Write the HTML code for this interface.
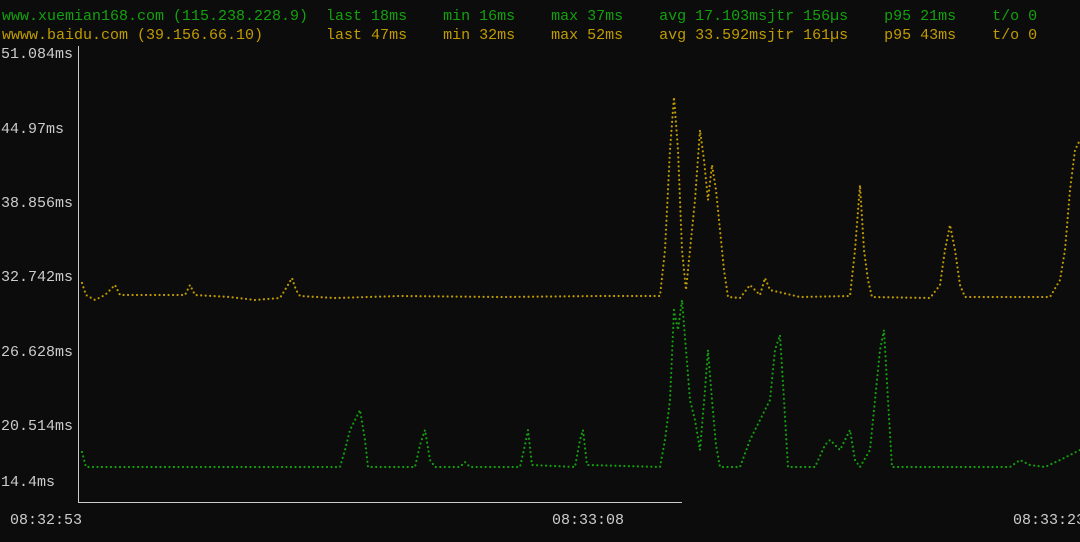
<!DOCTYPE html>
<html><head><meta charset="utf-8"><style>
html,body{margin:0;padding:0;background:#0c0c0c;width:1080px;height:542px;overflow:hidden}
.t{position:absolute;font-family:"Liberation Mono","DejaVu Sans Mono",monospace;font-size:15px;line-height:18px;white-space:pre}
.g{color:#13a10e}.y{color:#c19c00}.w{color:#cccccc}
</style></head><body>
<div class="t g" style="left:2px;top:8px">www.xuemian168.com (115.238.228.9)  last 18ms    min 16ms    max 37ms    avg 17.103msjtr 156µs    p95 21ms    t/o 0</div>
<div class="t y" style="left:2px;top:27px">wwww.baidu.com (39.156.66.10)       last 47ms    min 32ms    max 52ms    avg 33.592msjtr 161µs    p95 43ms    t/o 0</div>
<div class="t w" style="left:1px;top:46px">51.084ms</div>
<div class="t w" style="left:1px;top:121px">44.97ms</div>
<div class="t w" style="left:1px;top:195px">38.856ms</div>
<div class="t w" style="left:1px;top:269px">32.742ms</div>
<div class="t w" style="left:1px;top:344px">26.628ms</div>
<div class="t w" style="left:1px;top:418px">20.514ms</div>
<div class="t w" style="left:1px;top:474px">14.4ms</div>
<div class="t w" style="left:10px;top:512px">08:32:53</div>
<div class="t w" style="left:552px;top:512px">08:33:08</div>
<div class="t w" style="left:1013px;top:512px">08:33:23</div>
<svg width="1080" height="542" style="position:absolute;left:0;top:0">
<line x1="78.5" y1="46" x2="78.5" y2="502" stroke="#ccc" stroke-width="1"/>
<line x1="78" y1="502.5" x2="682" y2="502.5" stroke="#ccc" stroke-width="1"/>
<g fill="none" stroke-width="2.2" stroke-dasharray="0 4.5" stroke-linecap="round">
<polyline stroke="#c19c00" points="82,283 86,295 95,300 105,295 115,285 120,295 185,295 190,285 195,295 230,297 255,300 280,298 288,285 292,278 296,290 300,296 335,298 400,296 500,297 600,296 660,296 665,250 670,150 674,97 678,150 682,250 686,290 690,250 695,200 700,130 704,160 708,200 712,165 716,190 720,230 724,270 728,297 740,298 750,285 760,295 765,278 770,290 800,297 850,296 855,250 860,185 864,250 868,280 872,297 930,298 940,285 945,250 950,225 955,250 960,285 965,297 1050,297 1060,280 1065,250 1070,190 1075,150 1080,140"/>
<polyline stroke="#13a10e" points="82,452 86,467 340,467 345,450 350,430 355,420 360,410 365,440 368,467 415,467 420,445 425,430 430,460 435,467 460,467 465,462 470,467 520,467 525,445 528,430 532,465 575,467 580,440 583,430 587,465 660,467 665,440 670,400 674,310 678,330 682,300 686,350 690,400 695,420 700,450 705,390 708,350 712,400 716,445 720,467 740,467 750,440 760,420 770,400 775,350 780,335 784,400 788,467 815,467 825,445 830,440 840,450 850,430 855,460 860,467 870,450 875,400 880,350 884,330 888,400 892,467 1010,467 1020,460 1030,465 1045,467 1060,460 1070,455 1080,450"/>
</g>
</svg>
</body></html>
